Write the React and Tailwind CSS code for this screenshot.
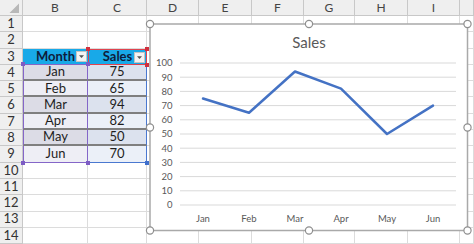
import React from "react";

const cols = ["B", "C", "D", "E", "F", "G", "H", "I", ""];
const data = [
  ["Jan", 75],
  ["Feb", 65],
  ["Mar", 94],
  ["Apr", 82],
  ["May", 50],
  ["Jun", 70],
];

const HANDLE_POS = {
  tl: "-left-[3px] -top-[3px]",
  tr: "-right-[3px] -top-[3px]",
  bl: "-left-[3px] -bottom-[3px]",
  br: "-right-[3px] -bottom-[3px]",
};
const HANDLE_COL = {
  red: "bg-[#d0303e]",
  purple: "bg-[#7d5cc4]",
  blue: "bg-[#3f6fcc]",
};

function Handle({ pos, color }) {
  return <span className={`absolute z-10 w-[4px] h-[4px] ${HANDLE_POS[pos]} ${HANDLE_COL[color]}`} />;
}

function FilterBtn() {
  return (
    <span className="absolute right-[1px] top-[2px] w-[11px] h-[11px] bg-[#f3f3f3] border border-[#c4c4c4] flex items-center justify-center">
      <svg width="7" height="5" viewBox="0 0 7 5">
        <path d="M1 1.2 L6 1.2 L3.5 4 Z" fill="#555" />
      </svg>
    </span>
  );
}

function Chart() {
  const x0 = 180, x1 = 456, y0 = 205, k = 1.42;
  const ticks = [0, 10, 20, 30, 40, 50, 60, 70, 80, 90, 100];
  const xs = data.map((_, i) => 203 + i * 46);
  const pts = data.map((d, i) => `${xs[i]},${(y0 - d[1] * k).toFixed(1)}`).join(" ");
  const handles = [
    [150, 24], [309, 24], [467.5, 24],
    [150, 127.5], [467.5, 127.5],
    [150, 230.5], [309, 230.5], [467.5, 230.5],
  ];
  return (
    <div className="absolute left-[144px] top-[18px] w-[330px] h-[220px] z-20">
      <svg width="330" height="220" viewBox="144 18 330 220" style={{ fontFamily: "Lato, 'Liberation Sans', sans-serif" }}>
        <rect x="150" y="24" width="317.5" height="206.5" fill="#ffffff" stroke="#a9a9a9" strokeWidth="1.5" />
        <text x="309" y="47.5" textAnchor="middle" fontSize="15" fill="#595959">Sales</text>
        {ticks.map((t) => (
          <g key={t}>
            <line x1={x0} x2={x1} y1={y0 - t * k} y2={y0 - t * k} stroke="#d9d9d9" strokeWidth="1" />
            <text x="172.5" y={y0 - t * k + 3.3} textAnchor="end" fontSize="9.5" fill="#595959">{t}</text>
          </g>
        ))}
        {data.map((d, i) => (
          <text key={d[0]} x={xs[i]} y="221.5" textAnchor="middle" fontSize="9.5" fill="#595959">{d[0]}</text>
        ))}
        <polyline points={pts} fill="none" stroke="#4472c4" strokeWidth="2.5" strokeLinejoin="round" strokeLinecap="round" />
        {handles.map(([cx, cy], i) => (
          <circle key={i} cx={cx} cy={cy} r="3.6" fill="#ffffff" stroke="#8f8f8f" strokeWidth="1.2" />
        ))}
      </svg>
    </div>
  );
}

function HeaderCell({ label, red }) {
  return (
    <div
      className={`relative bg-[#18a9e8] flex items-center justify-center font-bold text-[13px] text-[#0e1c3c] ${
        red
          ? "border-[1.5px] border-[#e0434f]"
          : "border-b-[1.5px] border-b-[#8466c8]"
      }`}
    >
      {label}
      <FilterBtn />
      {red && <Handle pos="tl" color="red" />}
      {red && <Handle pos="tr" color="red" />}
      {red && <Handle pos="br" color="red" />}
    </div>
  );
}

function DataCell({ r, col, value }) {
  const odd = (r - 4) % 2 === 0;
  const last = r === 9;
  const first = r === 4;
  if (col === 0) {
    return (
      <div
        className={`relative flex items-center justify-center text-[13px] text-[#1e1e1e] border-l-[1.5px] border-r-[1.5px] border-l-[#8466c8] border-r-[#8466c8] ${
          odd ? "bg-[#dcdce6]" : "bg-[#eeeef5]"
        } ${last ? "border-b-[1.5px] border-b-[#8466c8]" : "border-b-2 border-b-[#7f7f7f]"}`}
      >
        {value}
        {first && <Handle pos="tl" color="purple" />}
        {first && <Handle pos="tr" color="purple" />}
        {last && <Handle pos="bl" color="purple" />}
        {last && <Handle pos="br" color="purple" />}
      </div>
    );
  }
  return (
    <div
      className={`relative flex items-center justify-center text-[13px] text-[#1e1e1e] border-r-[1.5px] border-r-[#4a78d0] ${
        odd ? "bg-[#dce2ee]" : "bg-[#ebf0f8]"
      } ${last ? "border-b-[1.5px] border-b-[#4a78d0]" : "border-b-2 border-b-[#7f7f7f]"}`}
    >
      {value}
      {last && <Handle pos="br" color="blue" />}
    </div>
  );
}

export default function App() {
  const font = { fontFamily: "Lato, 'Liberation Sans', sans-serif" };
  const cells = [];
  cells.push(
    <div key="corner" className="relative bg-[#efefef] border-r border-b border-[#c8c8c8] flex items-end justify-end pr-[2px] pb-[1px]">
      <svg width="11" height="11" viewBox="0 0 11 11">
        <path d="M10 0.5 L10 10 L0.5 10 Z" fill="#b8b8b8" />
      </svg>
    </div>
  );
  cols.forEach((c, i) => {
    cells.push(
      <div key={"h" + i} className="bg-[#efefef] border-r border-b border-[#c8c8c8] flex items-center justify-center text-[12px] text-[#444]">
        {c}
      </div>
    );
  });
  for (let r = 1; r <= 14; r++) {
    cells.push(
      <div key={"r" + r} className="bg-[#efefef] border-r border-b border-[#c8c8c8] flex items-center justify-center text-[13px] text-[#333]">
        {r}
      </div>
    );
    cols.forEach((c, i) => {
      const key = `c${r}-${i}`;
      if (r === 3 && i < 2) {
        cells.push(<HeaderCell key={key} label={i === 0 ? "Month" : "Sales"} red={i === 1} />);
      } else if (r >= 4 && r <= 9 && i < 2) {
        const d = data[r - 4];
        cells.push(<DataCell key={key} r={r} col={i} value={i === 0 ? d[0] : d[1]} />);
      } else {
        cells.push(<div key={key} className="bg-white border-r border-b border-[#dcdcdc]" />);
      }
    });
  }

  return (
    <div className="relative w-[474px] h-[244px] overflow-hidden bg-white" style={font}>
      <div className="grid grid-cols-[23px_65px_59px_52px_53px_52px_51px_53px_52px_1fr] grid-rows-[16px_repeat(14,16.3px)] w-[474px]">
        {cells}
      </div>
      <Chart />
    </div>
  );
}
